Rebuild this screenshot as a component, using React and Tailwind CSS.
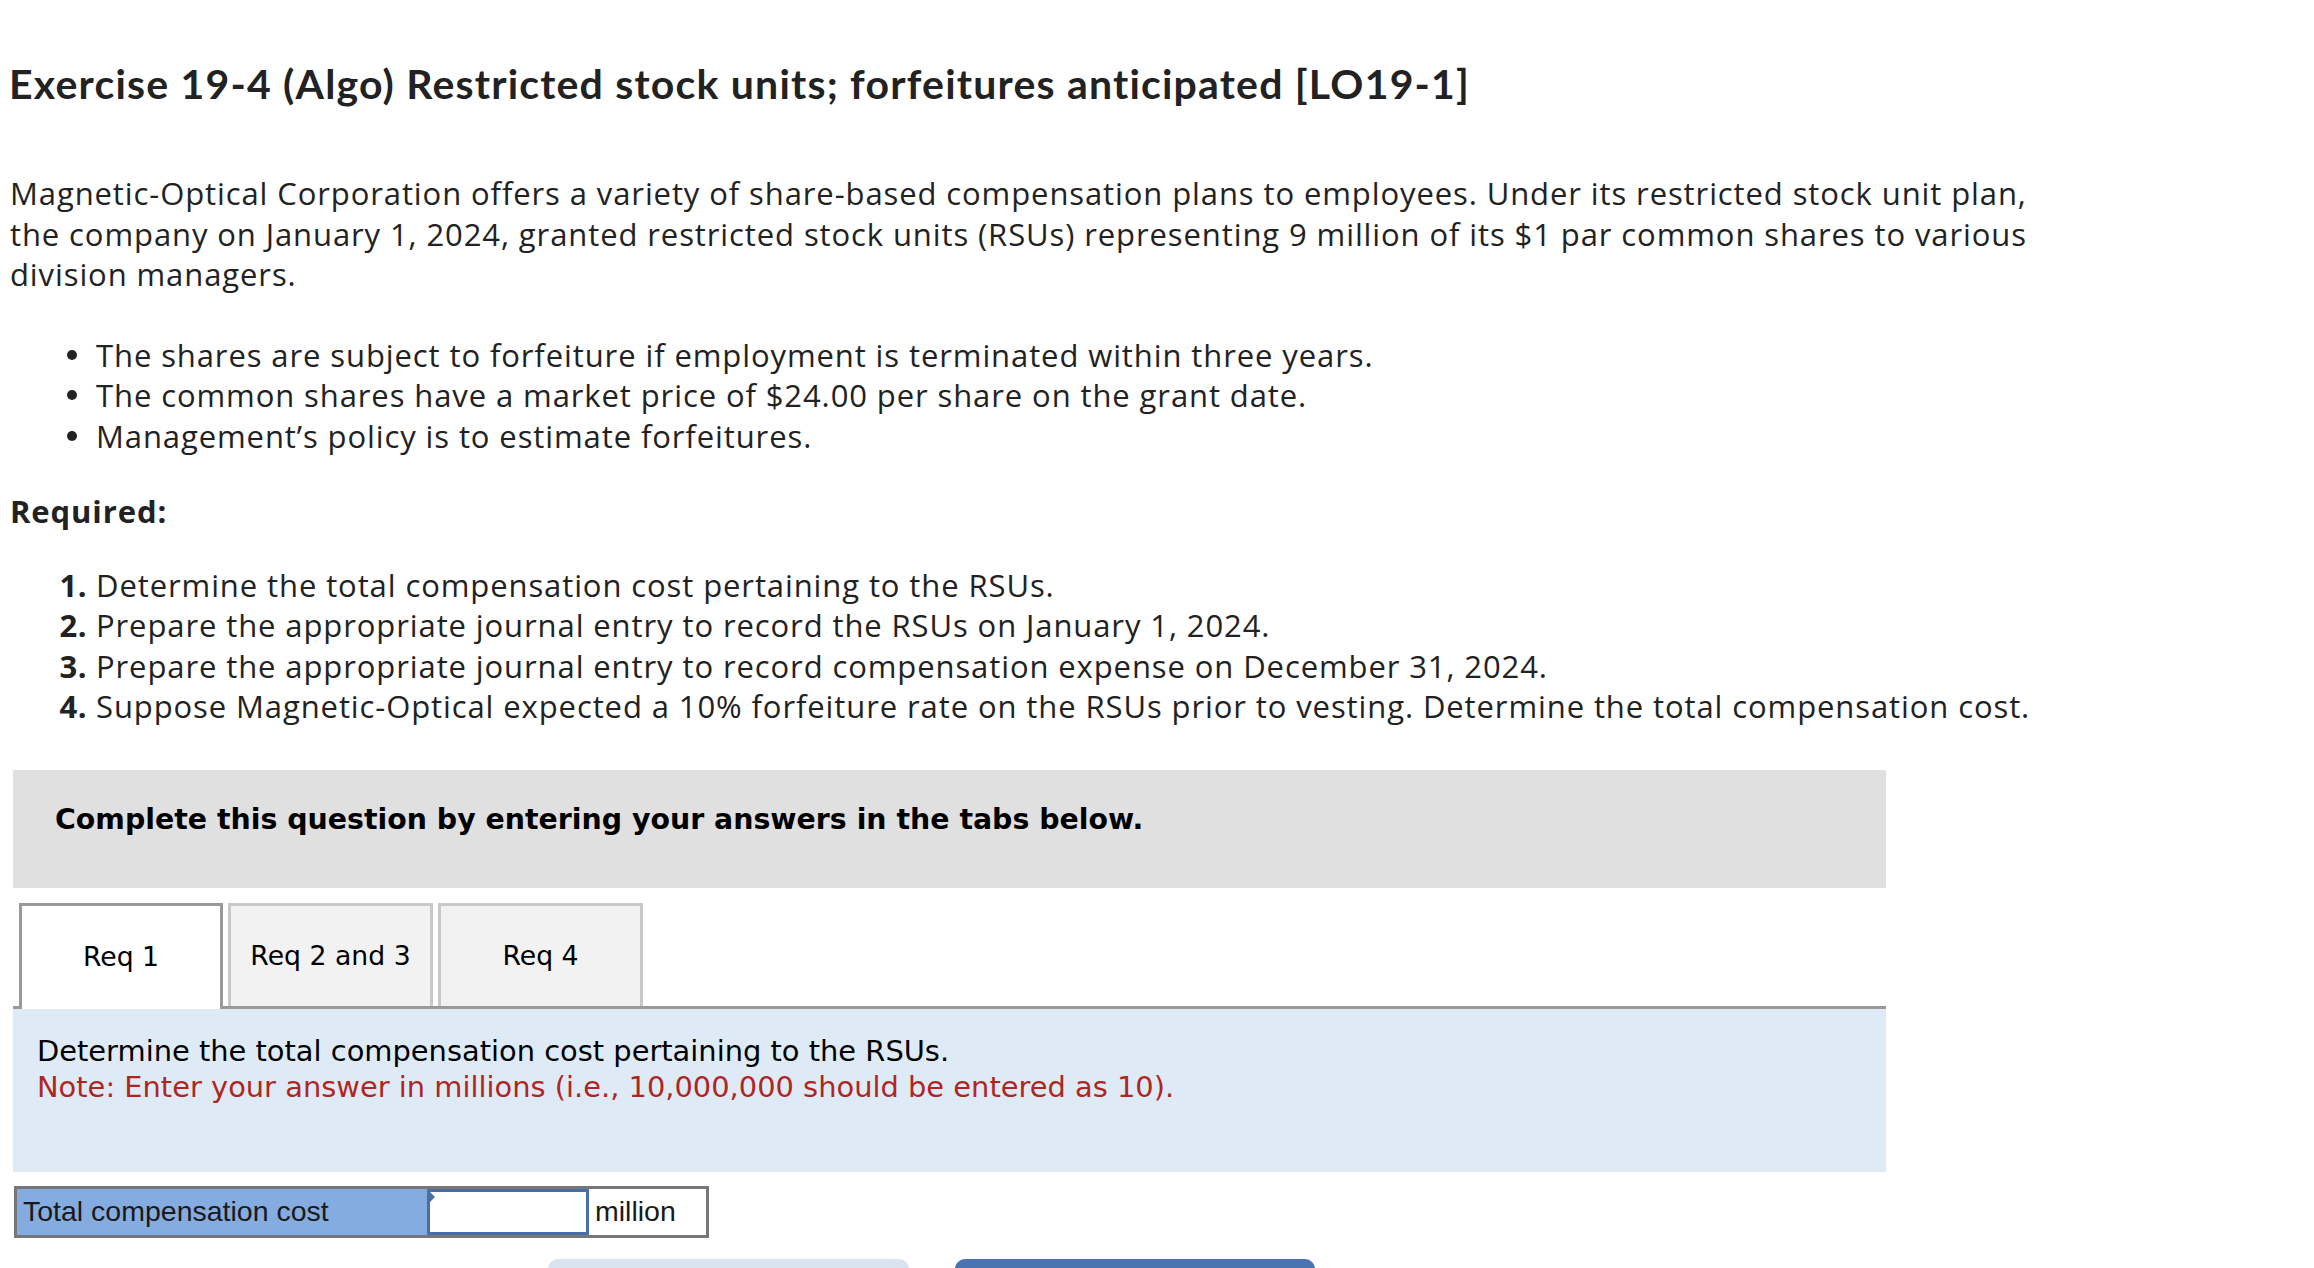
import React from "react";

const body = { fontFamily: "'Open Sans', Lato, sans-serif" };
const head = { fontFamily: "Lato, 'Open Sans', sans-serif" };
const verd = { fontFamily: "'DejaVu Sans', Verdana, sans-serif" };
const arial = { fontFamily: "'Liberation Sans', Arial, sans-serif" };

export default function App() {
  return (
    <div className="w-[2314px] h-[1268px] overflow-hidden bg-white text-[#222]">
      <div className="pt-[59px] pl-[9px]">
        <h1 className="text-[41px] leading-[50px] font-bold tracking-[1.2px]" style={head}>
          Exercise 19-4 (Algo) Restricted stock units; forfeitures anticipated [LO19-1]
        </h1>
        <div style={body} className="tracking-[0.9px]">
          <p className="mt-[64px] text-[31px] leading-[40.5px] pl-[1px]">
            Magnetic-Optical Corporation offers a variety of share-based compensation plans to employees. Under its restricted stock unit plan,
            <br />
            the company on January 1, 2024, granted restricted stock units (RSUs) representing 9 million of its $1 par common shares to various
            <br />
            division managers.
          </p>
          <ul className="mt-[40px] text-[31px] leading-[40.5px]">
            {[
              "The shares are subject to forfeiture if employment is terminated within three years.",
              "The common shares have a market price of $24.00 per share on the grant date.",
              "Management\u2019s policy is to estimate forfeitures.",
            ].map((t) => (
              <li key={t} className="flex">
                <span className="w-[87px] shrink-0 flex justify-end pr-[19px] items-center">
                  <span className="w-[10px] h-[10px] rounded-full bg-[#222]" />
                </span>
                <span>{t}</span>
              </li>
            ))}
          </ul>
          <div className="mt-[35px] text-[31px] leading-[40.5px] font-bold pl-[1px]">Required:</div>
          <ol className="mt-[33px] text-[31px] leading-[40.5px]">
            {[
              "Determine the total compensation cost pertaining to the RSUs.",
              "Prepare the appropriate journal entry to record the RSUs on January 1, 2024.",
              "Prepare the appropriate journal entry to record compensation expense on December 31, 2024.",
              "Suppose Magnetic-Optical expected a 10% forfeiture rate on the RSUs prior to vesting. Determine the total compensation cost.",
            ].map((t, i) => (
              <li key={i} className="flex">
                <span className="w-[87px] shrink-0 text-right pr-[9px] font-bold tracking-[0.5px]">{i + 1}.</span>
                <span>{t}</span>
              </li>
            ))}
          </ol>
        </div>
      </div>

      <div className="ml-[13px] w-[1873px]">
        <div className="mt-[43px] h-[118px] bg-[#e0e0e0] pt-[33px] pl-[42px]" style={verd}>
          <div className="text-[28.4px] leading-[34px] font-bold text-black">
            Complete this question by entering your answers in the tabs below.
          </div>
        </div>

        <div className="mt-[15px] flex items-end border-b-[3px] border-[#999] pl-[6px] gap-[5px]" style={verd}>
          <div className="w-[204px] h-[106px] -mb-[3px] bg-white border-t-[3px] border-x-[3px] border-[#999] flex items-center justify-center text-[26.7px] text-black">
            Req 1
          </div>
          <div className="w-[205px] h-[103px] bg-[#f2f2f2] border-t-[3px] border-x-[3px] border-[#c8c8c8] flex items-center justify-center text-[26.7px] text-black pt-[2px]">
            Req 2 and 3
          </div>
          <div className="w-[205px] h-[103px] bg-[#f2f2f2] border-t-[3px] border-x-[3px] border-[#c8c8c8] flex items-center justify-center text-[26.7px] text-black pt-[2px]">
            Req 4
          </div>
        </div>

        <div className="h-[163px] bg-[#deebf7] pt-[24px] pl-[24px]" style={verd}>
          <div className="text-[28.9px] leading-[36px] text-black">
            Determine the total compensation cost pertaining to the RSUs.
          </div>
          <div className="text-[28.9px] leading-[36px] text-[#b0261f]">
            Note: Enter your answer in millions (i.e., 10,000,000 should be entered as 10).
          </div>
        </div>

        <div className="mt-[14px] ml-[1px] w-[695px] h-[52px] flex border-[3px] border-[#777]" style={arial}>
          <div className="w-[410px] bg-[#85ace0] flex items-center pl-[6px] text-[28.5px] text-[#1a1a1a]">
            Total compensation cost
          </div>
          <div className="relative w-[162px] bg-white border-[3px] border-[#4a6fa8]">
            <span className="absolute left-[-3px] top-[-3px] w-0 h-0 border-t-[8px] border-b-[8px] border-l-[8px] border-t-transparent border-b-transparent border-l-[#4a6fa8]" />
          </div>
          <div className="flex-1 bg-white flex items-center pl-[6px] text-[28.5px] text-[#1a1a1a]">
            million
          </div>
        </div>

        <div className="mt-[21px] ml-[535px] flex gap-[46px]">
          <div className="w-[361px] h-[60px] rounded-[10px] bg-[#d9e4f0]" />
          <div className="w-[360px] h-[60px] rounded-[10px] bg-[#4a73b1]" />
        </div>
      </div>
    </div>
  );
}
